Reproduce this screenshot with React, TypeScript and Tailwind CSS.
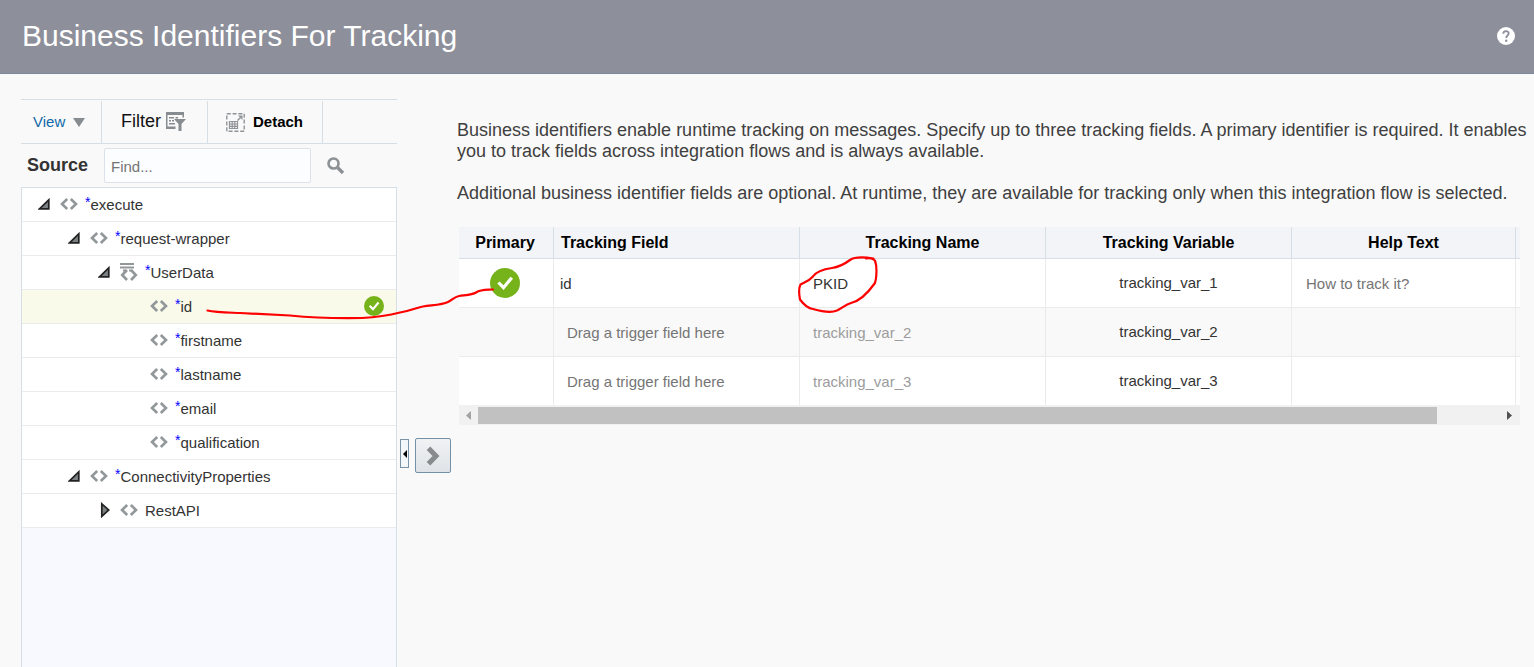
import { useState } from "react";

type TreeNode = {
  label: string;
  level: number;
  required?: boolean;
  expanded?: boolean;
  repeating?: boolean;
  selected?: boolean;
};

const nodes: TreeNode[] = [
  { label: "execute", level: 0, required: true, expanded: true },
  { label: "request-wrapper", level: 1, required: true, expanded: true },
  { label: "UserData", level: 2, required: true, expanded: true, repeating: true },
  { label: "id", level: 3, required: true, selected: true },
  { label: "firstname", level: 3, required: true },
  { label: "lastname", level: 3, required: true },
  { label: "email", level: 3, required: true },
  { label: "qualification", level: 3, required: true },
  { label: "ConnectivityProperties", level: 1, required: true, expanded: true },
  { label: "RestAPI", level: 2, expanded: false },
];

const indents = ["pl-4", "pl-[46px]", "pl-[76px]", "pl-[106px]"];

const rows = [
  { field: "id", name: "PKID", variable: "tracking_var_1", primary: true },
  { field: "", name: "", variable: "tracking_var_2", primary: false },
  { field: "", name: "", variable: "tracking_var_3", primary: false },
];

function CheckBadge({ className }: { className: string }) {
  return (
    <svg viewBox="0 0 30 30" className={className} aria-hidden="true">
      <circle cx="15" cy="15" r="15" fill="#76b31b" />
      <path d="M8.500 14.500l5 5.200 8.300-10" fill="none" stroke="#fff" strokeWidth="3.200" />
    </svg>
  );
}

function ElementIcon({ repeating }: { repeating?: boolean }) {
  return (
    <svg viewBox="0 0 18 18" className="size-[18px] shrink-0" fill="none" stroke="#92979a" aria-hidden="true">
      {repeating ? (
        <>
          <path d="M0 1h14M0 4.500h14" strokeWidth="2" />
          <path d="M7 7L2.200 12 7 17M11 7l4.800 5-4.800 5" strokeWidth="2.600" />
          <path d="M3 7.500h3M9 7.500h3" strokeWidth="2" />
        </>
      ) : (
        <path d="M7.200 4L2 9l5.200 5M10.800 4L16 9l-5.200 5" strokeWidth="2.600" />
      )}
    </svg>
  );
}

function Toggle({ expanded }: { expanded: boolean }) {
  return (
    <button type="button" aria-label={expanded ? "Collapse" : "Expand"} className="w-3 shrink-0 pb-0.5">
      {expanded ? (
        <svg viewBox="0 0 12 12" className="size-3">
          <path d="M1.500 10.800L10.800 1.800v9z" fill="#7c8184" stroke="#222" strokeWidth="1.700" />
        </svg>
      ) : (
        <svg viewBox="0 0 12 16" className="h-4 w-3">
          <path d="M3.800 1.800L10.800 8l-7 6.400z" fill="#7c8184" stroke="#222" strokeWidth="1.700" />
        </svg>
      )}
    </button>
  );
}

function Toolbar() {
  return (
    <div className="flex h-[45px] border-y border-[#d6dfe6] pt-px">
      <button type="button" className="flex w-[81px] items-center gap-2 border-r border-[#d6dfe6] pl-3 text-[15px] text-[#1069a8]">
        View
        <svg viewBox="0 0 12 9" className="h-[9px] w-3">
          <path d="M0 0h12L6 9z" fill="#878c90" />
        </svg>
      </button>
      <button type="button" className="flex w-[106px] items-center gap-[5px] border-r border-[#d6dfe6] pb-0.5 pl-[19px] text-[18px] text-[#111]">
        Filter
        <svg viewBox="0 0 20 19" className="h-[19px] w-5" fill="#878c90">
          <path d="M0 0h18v5.500h-1.500V3H1.500v11.500H9.500V17H0z" />
          <path d="M3 5h5v1.500H3zM9.500 5H12v1.500H9.500zM3 8h2v1.500H3zM6 8h2v1.500H6zM3 11h6v1.500H3z" />
          <path d="M8 7h12l-4.500 5v7H12.500v-7z" />
        </svg>
      </button>
      <button type="button" className="flex w-[115px] items-center gap-2 border-r border-[#d6dfe6] pl-[18px] text-[15px] font-bold text-black">
        <svg viewBox="0 0 19 19" className="size-[19px]" fill="none" stroke="#909498">
          <path d="M.8.8h17.400v17.400H.8z" strokeWidth="1.400" strokeDasharray="4 1.800" />
          <path d="M3.500 8.500h8v7h-8zM3.500 11h8M3.500 13.300h8M6.200 9v6.500M8.800 9v6.500" strokeWidth="1.200" />
          <path d="M11.500 7.500l3-3" strokeWidth="1.500" />
          <path d="M12 2.500h4.500V7z" fill="#909498" stroke="none" />
        </svg>
        Detach
      </button>
    </div>
  );
}

function SourcePanel() {
  const [query, setQuery] = useState("");

  return (
    <section className="flex w-[376px] shrink-0 flex-col pt-[25px]">
      <Toolbar />
      <div className="flex items-center py-1 pl-[6px]">
        <label htmlFor="find" className="w-[77px] text-[18px] font-bold text-[#333]">
          Source
        </label>
        <input
          id="find"
          type="text"
          placeholder="Find..."
          value={query}
          onChange={(e) => setQuery(e.target.value)}
          className="h-[35px] w-[207px] rounded-xs border border-[#dbe3e9] bg-[#fbfdff] px-[6px] pt-0.5 text-[15px] text-[#333] placeholder:text-[#757575]"
        />
        <button type="button" aria-label="Search" className="ml-4">
          <svg viewBox="0 0 18 18" className="size-[18px]" fill="none" stroke="#8c9195">
            <circle cx="6.500" cy="6.500" r="5" strokeWidth="2.600" />
            <path d="M10.500 10.500l5.500 5.500" strokeWidth="3.400" />
          </svg>
        </button>
      </div>
      <div className="flex-1 border-x border-t border-[#d6dfe6] bg-[#f7f9fe]">
        <ul>
          {nodes.map((node) => (
            <li
              key={node.label}
              className={`flex h-[34px] items-center border-b border-[#e9ebed] pr-3 text-[15px] text-[#333] ${indents[node.level]} ${
                node.selected ? "bg-[#f9faea]" : "bg-white"
              }`}
            >
              {node.expanded === undefined ? <span className="w-3" /> : <Toggle expanded={node.expanded} />}
              <span className="ml-[10px] flex pb-0.5">
                <ElementIcon repeating={node.repeating} />
              </span>
              <span className="ml-[7px] flex-1 pt-0.5">
                {node.required && <span className="relative -top-[3px] text-[14px] text-[#00f]">*</span>}
                {node.label}
              </span>
              {node.selected && (
                <span className="pb-0.5">
                  <CheckBadge className="size-5" />
                </span>
              )}
            </li>
          ))}
        </ul>
      </div>
    </section>
  );
}

function Splitter() {
  return (
    <div className="flex shrink-0 items-start gap-[6px] pt-[364px] pl-[3px]">
      <button type="button" aria-label="Collapse pane" className="mt-px flex h-[29px] w-[9px] items-center justify-center border border-[#7893a8] bg-[#f4f7fa]">
        <svg viewBox="0 0 4 8" className="h-2 w-1">
          <path d="M4 0v8L0 4z" fill="#000" />
        </svg>
      </button>
      <button
        type="button"
        aria-label="Add selected field"
        className="flex h-[35px] w-9 items-center justify-center rounded-xs border border-[#7390a6] bg-linear-to-b from-[#f0f2f4] to-[#dfe3e7]"
      >
        <svg viewBox="0 0 14 20" className="h-5 w-[14px]">
          <path d="M2.500 2.200L10 10l-7.500 7.800" fill="none" stroke="#878b8f" strokeWidth="5" />
        </svg>
      </button>
    </div>
  );
}

function TrackingTable() {
  const head = "h-8 border-r border-b border-[#d6dfe6] bg-[#f2f4f8] font-bold text-black";
  const cell = "h-[49px] border-r border-b border-[#e9ebed]";

  return (
    <div className="mr-[14px] ml-[2px]">
      <table className="w-full table-fixed border-separate border-spacing-0 text-[15px] text-[#333]">
        <thead className="text-[16px]">
          <tr>
            <th className={`${head} w-[95px] pr-0.5`}>Primary</th>
            <th className={`${head} w-[246px] pl-[7px] text-left`}>Tracking Field</th>
            <th className={`${head} w-[246px]`}>Tracking Name</th>
            <th className={`${head} w-[246px]`}>Tracking Variable</th>
            <th className={head}>Help Text</th>
            <td className="w-1 border-b border-[#d6dfe6] bg-[#f2f4f8]" />
          </tr>
        </thead>
        <tbody>
          {rows.map((row) => (
            <tr key={row.variable} className="bg-white even:bg-[#f9f9f9]">
              <td className={`${cell} pr-0.5`}>{row.primary && <CheckBadge className="mx-auto size-[30px]" />}</td>
              <td className={`${cell} pt-0.5 ${row.field ? "pl-[6px]" : "pl-[13px] text-[#757575]"}`}>
                {row.field || "Drag a trigger field here"}
              </td>
              <td className={`${cell} px-[13px] pt-0.5`}>
                <input
                  type="text"
                  aria-label={`Tracking name for ${row.variable}`}
                  defaultValue={row.name}
                  placeholder={row.variable}
                  className="w-full bg-transparent placeholder:text-[#9c9c9c]"
                />
              </td>
              <td className={`${cell} text-center`}>{row.variable}</td>
              <td className={`${cell} px-[14px] pt-0.5`}>
                {row.primary && (
                  <input
                    type="text"
                    aria-label="Help text"
                    placeholder="How to track it?"
                    className="w-full bg-transparent placeholder:text-[#757575]"
                  />
                )}
              </td>
              <td className="border-b border-[#e9ebed]" />
            </tr>
          ))}
        </tbody>
      </table>
      <div className="-mt-px flex h-5 items-center bg-[#f1f1f1]">
        <button type="button" aria-label="Scroll left" className="flex w-[19px] justify-center">
          <svg viewBox="0 0 5 9" className="h-[9px] w-[5px]">
            <path d="M5 0v9L0 4.500z" fill="#a3a3a3" />
          </svg>
        </button>
        <div className="flex-1">
          <div className="h-[17px] w-[94%] bg-[#c1c1c1]" />
        </div>
        <button type="button" aria-label="Scroll right" className="flex w-[22px] justify-center">
          <svg viewBox="0 0 5 9" className="h-[9px] w-[5px]">
            <path d="M0 0v9l5-4.500z" fill="#505050" />
          </svg>
        </button>
      </div>
    </div>
  );
}

// Hand-drawn markup linking the source field to its primary identifier
function Annotations() {
  return (
    <svg
      viewBox="0 0 900 340"
      className="pointer-events-none absolute top-0 left-0 h-[340px] w-[900px]"
      fill="none"
      stroke="#fe0000"
      strokeWidth="2.200"
      strokeLinecap="round"
      strokeLinejoin="round"
      aria-hidden="true"
    >
      <path d="M207.500 310.500C216 312.500 228 312.500 240 313L290 315.500C315 318 335 318.500 362 318C378 317 388 315.500 400 312.500C412 310.500 417 307.500 423 306.500C433 305 442 305 448 302C453 299.500 454 297 459 296C466 295 472 295 476 292.500C481 289.500 485 290 493 289.500" />
      <path d="M873.500 258.500C864 257 855 256.500 850 260C844 264.500 839 267 832 268C824 269 816 272 813 276.500C809 281 805 282 800.500 284.500C798 289 799 294 800 299.500C804 305 808 308.500 813 309C820 311 830 313.500 837 310.500C842 308 846 304.500 851 303C862 300.500 870 290 875 283C877 276 877 266 875 260.500C873 258.500 869 258 866 258.500" />
    </svg>
  );
}

export default function App() {
  return (
    <div className="relative flex min-h-screen flex-col bg-[#f9f9f9] font-['Liberation_Sans',Arial,sans-serif]">
      <header className="flex h-[74px] items-center justify-between border-b border-[#7b8a9b] bg-[#8d8f9b] pr-[19px] pb-0.5 pl-[22px]">
        <h1 className="text-[30px] text-white">Business Identifiers For Tracking</h1>
        <button type="button" aria-label="Help">
          <svg viewBox="0 0 18 18" className="size-[18px]">
            <circle cx="9" cy="9" r="9" fill="#fff" />
            <path d="M6.300 6.800C6.300 3.300 11.700 3.300 11.700 6.500C11.700 8.500 9.200 8.600 9.200 10.900" fill="none" stroke="#8d8f9b" strokeWidth="1.800" />
            <circle cx="9.200" cy="13.700" r="1.200" fill="#8d8f9b" />
          </svg>
        </button>
      </header>

      <main className="flex flex-1 pl-[21px]">
        <SourcePanel />
        <Splitter />
        <section className="min-w-0 flex-1 pt-[46px] pl-[6px]">
          <div className="mb-[23px] space-y-[21px] text-[18px] leading-[21px] text-[#404040]">
            <p>
              Business identifiers enable runtime tracking on messages. Specify up to three tracking fields. A primary
              identifier is required. It enables you to track fields across integration flows and is always available.
            </p>
            <p>
              Additional business identifier fields are optional. At runtime, they are available for tracking only when
              this integration flow is selected.
            </p>
          </div>
          <TrackingTable />
        </section>
      </main>

      <Annotations />
    </div>
  );
}
